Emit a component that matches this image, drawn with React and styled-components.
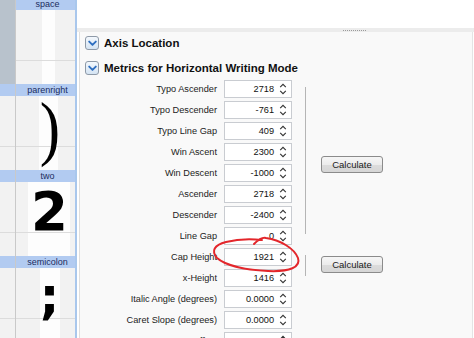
import styled, { createGlobalStyle } from 'styled-components';

const Global = createGlobalStyle`
  html, body {
    margin: 0;
    padding: 0;
    width: 474px;
    height: 338px;
    overflow: hidden;
    background: #fff;
  }
  body {
    font-family: "Liberation Sans", Arial, sans-serif;
    font-size: 9px;
    color: #1a1a1a;
  }
`;

const Screen = styled.div`
  position: relative;
  display: flex;
  width: 474px;
  height: 338px;
  overflow: hidden;
`;

/* ---------- glyph grid on the left ---------- */

const GlyphPanel = styled.div`
  display: flex;
  width: 75px;
  flex: none;
  border-right: 2px solid #a9c7ec;
  background: #c9c9c9;
  gap: 1px;
`;

const GlyphColumn = styled.div`
  display: flex;
  flex-direction: column;
  width: ${(p) => p.$width}px;
  margin-top: -2px;
`;

const Cell = styled.div`
  display: flex;
  flex-direction: column;
  height: 86px;
  flex: none;
`;

const CellHeader = styled.div`
  height: 12px;
  flex: none;
  background: ${(p) => (p.$selected ? '#b8c2cc' : '#b2cbf1')};
  color: #1b2c5e;
  font-size: 9px;
  line-height: 12px;
  text-align: center;
  padding-left: 4px;
  white-space: nowrap;
  overflow: hidden;
`;

const CellBody = styled.div`
  flex: 1;
  display: flex;
  justify-content: center;
  align-items: flex-start;
  padding-left: ${(p) => p.$shift || 0}px;
  padding-top: ${(p) => p.$top || 0}px;
  overflow: hidden;
  background: ${(p) =>
    p.$selected
      ? '#b8c2cc'
      : `linear-gradient(#dcdcdc, #dcdcdc) 0 ${p.$base}px / 100% 1px no-repeat,
         linear-gradient(#fdfdfd, #fdfdfd) ${p.$bandX}px 0 / ${p.$bandW}px 100% no-repeat,
         #f2f2f2`};
`;

const Glyph = styled.span`
  display: block;
  font-family: ${(p) => p.$font};
  font-weight: ${(p) => p.$weight || 400};
  font-size: ${(p) => p.$size}px;
  line-height: ${(p) => p.$lh}px;
  color: #000;
  transform: scaleX(${(p) => p.$sx || 1});
`;

/* ---------- properties pane on the right ---------- */

const Pane = styled.div`
  flex: 1;
  display: flex;
  flex-direction: column;
  background: #fff;
`;

const TopArea = styled.div`
  height: 28px;
  flex: none;
  background: #fff;
`;

const Splitter = styled.div`
  height: 4px;
  flex: none;
  background: #ececec;
  display: flex;
  align-items: center;
  padding-left: 266px;
`;

const Grip = styled.div`
  width: 23px;
  border-top: 1px dotted #9a9a9a;
`;

const Content = styled.div`
  flex: 1;
  margin: 0 1px 0 2px;
  border-left: 1px solid #dedede;
  border-right: 1px solid #e4e4e4;
  background: #f9f9f9;
  padding: 3px 0 0 5px;
  display: flex;
  flex-direction: column;
`;

const Section = styled.div`
  display: flex;
  align-items: center;
  gap: 5px;
  height: 16px;
  margin-bottom: ${(p) => p.$after}px;
`;

const Expander = styled.div`
  width: 14px;
  height: 14px;
  box-sizing: border-box;
  border: 1px solid #8e9aa8;
  border-radius: 3px;
  background: linear-gradient(#f3f8fd, #d5e4f3);
  display: flex;
  align-items: center;
  justify-content: center;
`;

const SectionTitle = styled.span`
  font-family: "Liberation Sans", Arial, sans-serif;
  font-weight: 700;
  font-size: 11.5px;
  color: #111;
`;

const Form = styled.div`
  display: flex;
  flex-direction: column;
  gap: 3px;
  margin-left: 12px;
`;

const Group = styled.div`
  display: flex;
`;

const Fields = styled.div`
  display: grid;
  grid-template-columns: 120px 68px;
  column-gap: 7px;
  row-gap: 3px;
  flex: none;
`;

const Label = styled.div`
  height: 18px;
  line-height: 18px;
  text-align: right;
  white-space: nowrap;
  color: #222;
  font-size: 9.2px;
`;

const Spin = styled.div`
  height: 18px;
  box-sizing: border-box;
  border: 1px solid #c9ccd1;
  background: #fff;
  display: flex;
  align-items: center;
  justify-content: flex-end;
  gap: 5px;
  padding-right: 4px;
`;

const Value = styled.span`
  color: #111;
  font-size: 9.2px;
`;

const Divider = styled.div`
  width: 1px;
  background: #b5b5b5;
  margin: 7px 0 11px 13px;
`;

const ButtonSlot = styled.div`
  display: flex;
  align-items: center;
  padding-left: 15px;
  padding-top: ${(p) => p.$drop || 0}px;
  padding-bottom: ${(p) => p.$lift || 0}px;
`;

const Button = styled.button`
  width: 62px;
  height: 17px;
  padding: 0;
  border: 1px solid #8b8b8b;
  border-radius: 3px;
  background: linear-gradient(#f6f6f6 0%, #ececec 50%, #dcdcdc 51%, #d6d6d6 100%);
  font-family: "Liberation Sans", Arial, sans-serif;
  font-size: 9.5px;
  color: #1a1a1a;
`;

const Scribble = styled.svg`
  position: absolute;
  left: 0;
  top: 0;
  pointer-events: none;
`;

function Chevron() {
  return (
    <svg width="9" height="7" viewBox="0 0 9 7">
      <path d="M1.2 1.6 L4.5 4.9 L7.8 1.6" fill="none" stroke="#2f6fc0" strokeWidth="1.9" strokeLinecap="round" strokeLinejoin="round" />
    </svg>
  );
}

function Arrows() {
  return (
    <svg width="8" height="12" viewBox="0 0 8 12">
      <path d="M1.2 4.2 L4 1.4 L6.8 4.2" fill="none" stroke="#333" strokeWidth="1.1" />
      <path d="M1.2 7.8 L4 10.6 L6.8 7.8" fill="none" stroke="#333" strokeWidth="1.1" />
    </svg>
  );
}

function Field({ label, value }) {
  return (
    <>
      <Label>{label}</Label>
      <Spin>
        <Value>{value}</Value>
        <Arrows />
      </Spin>
    </>
  );
}

const lineMetrics = [
  ['Typo Ascender', '2718'],
  ['Typo Descender', '-761'],
  ['Typo Line Gap', '409'],
  ['Win Ascent', '2300'],
  ['Win Descent', '-1000'],
  ['Ascender', '2718'],
  ['Descender', '-2400'],
  ['Line Gap', '0'],
];

const capMetrics = [
  ['Cap Height', '1921'],
  ['x-Height', '1416'],
];

const caretMetrics = [
  ['Italic Angle (degrees)', '0.0000'],
  ['Caret Slope (degrees)', '0.0000'],
  ['Caret Offset', '0'],
];

const glyphs = [
  { name: 'space', band: [26, 13] },
  { name: 'parenright', band: [23, 19], char: ')', font: '"Liberation Serif", serif', size: 72, lh: 64, top: 0, sx: 0.85 },
  { name: 'two', band: [12, 42], char: '2', font: '"DejaVu Sans", sans-serif', weight: 700, size: 53, lh: 50, top: 5, sx: 1 },
  { name: 'semicolon', band: [24, 20], char: ';', font: '"DejaVu Sans", sans-serif', weight: 700, size: 50, lh: 48, top: 4 },
];

export default function App() {
  return (
    <Screen>
      <Global />
      <GlyphPanel>
        <GlyphColumn $width={15}>
          {glyphs.map((g, i) => (
            <Cell key={g.name}>
              <CellHeader $selected={i === 0} />
              <CellBody $selected={i === 0} $base={50} $bandX={20} $bandW={0} />
            </Cell>
          ))}
        </GlyphColumn>
        <GlyphColumn $width={59}>
          {glyphs.map((g) => (
            <Cell key={g.name}>
              <CellHeader>{g.name}</CellHeader>
              <CellBody $base={50} $bandX={g.band[0]} $bandW={g.band[1]} $shift={8} $top={g.top}>
                {g.char && (
                  <Glyph $font={g.font} $weight={g.weight} $size={g.size} $lh={g.lh} $sx={g.sx}>
                    {g.char}
                  </Glyph>
                )}
              </CellBody>
            </Cell>
          ))}
        </GlyphColumn>
      </GlyphPanel>

      <Pane>
        <TopArea />
        <Splitter>
          <Grip />
        </Splitter>
        <Content>
          <Section $after={9}>
            <Expander>
              <Chevron />
            </Expander>
            <SectionTitle>Axis Location</SectionTitle>
          </Section>
          <Section $after={4}>
            <Expander>
              <Chevron />
            </Expander>
            <SectionTitle>Metrics for Horizontal Writing Mode</SectionTitle>
          </Section>
          <Form>
            <Group>
              <Fields>
                {lineMetrics.map(([l, v]) => (
                  <Field key={l} label={l} value={v} />
                ))}
              </Fields>
              <Divider />
              <ButtonSlot $drop={3}>
                <Button>Calculate</Button>
              </ButtonSlot>
            </Group>
            <Group>
              <Fields>
                {capMetrics.map(([l, v]) => (
                  <Field key={l} label={l} value={v} />
                ))}
              </Fields>
              <Divider />
              <ButtonSlot $lift={6}>
                <Button>Calculate</Button>
              </ButtonSlot>
            </Group>
            <Group>
              <Fields>
                {caretMetrics.map(([l, v]) => (
                  <Field key={l} label={l} value={v} />
                ))}
              </Fields>
            </Group>
          </Form>
        </Content>
      </Pane>

      <Scribble width="474" height="338" viewBox="0 0 474 338">
        <path
          d="M254 244 C258 240 262 237 266 238 C280 240 294 248 298 258 C301 267 290 272 268 271 C248 270 226 266 217 258 C211 251 214 245 226 242 C238 239 252 239 262 240"
          fill="none"
          stroke="#e3262b"
          strokeWidth="2"
          strokeLinecap="round"
          strokeLinejoin="round"
        />
      </Scribble>
    </Screen>
  );
}
